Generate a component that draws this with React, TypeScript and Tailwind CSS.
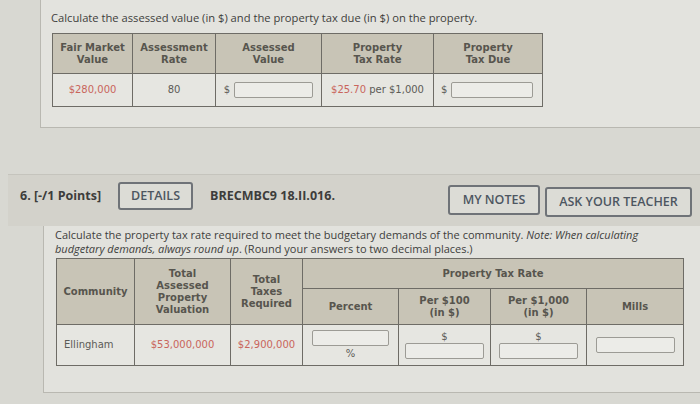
import React from 'react';

const TH =
  "border border-[#6e6c66] bg-[#c8c4b6] px-1 text-center align-middle font-['DejaVu_Sans',sans-serif] text-[10px] font-bold leading-[12px] text-[#57554e]";
const TD =
  "border border-[#6e6c66] bg-[#e6e6e1] px-1 text-center align-middle font-['DejaVu_Sans',sans-serif] text-[10px] leading-[12px] text-[#5c5b57]";
const RED = 'text-[#c9655c]';

const Box = ({ w = 'w-[79px]' }: { w?: string }) => (
  <span className={`inline-block h-[16px] ${w} rounded-[2px] border border-[#9c9b95] bg-[#ecece8] align-middle`} />
);

export default function App() {
  return (
    <div className="h-[404px] w-[700px] overflow-hidden bg-[#d8d8d2] font-['Open_Sans',sans-serif]">
      {/* previous question */}
      <div className="ml-[40px] h-[128px] border-b border-l border-[#b9b8b1] bg-[#e3e3de] pl-[10px] pt-[11px]">
        <p className="whitespace-nowrap text-[11.2px] leading-[14px] text-[#3e3e3c]">
          Calculate the assessed value (in $) and the property tax due (in $) on the property.
        </p>
        <table className="ml-[1px] mt-[8px] border-collapse">
          <thead>
            <tr className="h-[40px]">
              <th className={`${TH} w-[80px]`}>Fair Market<br />Value</th>
              <th className={`${TH} w-[83px]`}>Assessment<br />Rate</th>
              <th className={`${TH} w-[106px]`}>Assessed<br />Value</th>
              <th className={`${TH} w-[112px]`}>Property<br />Tax Rate</th>
              <th className={`${TH} w-[109px]`}>Property<br />Tax Due</th>
            </tr>
          </thead>
          <tbody>
            <tr className="h-[33px]">
              <td className={`${TD} ${RED}`}>$280,000</td>
              <td className={TD}>80</td>
              <td className={TD}>
                <span className="mr-[4px]">$</span>
                <Box />
              </td>
              <td className={TD}>
                <span className={RED}>$25.70</span> per $1,000
              </td>
              <td className={`${TD} text-left`}>
                <span className="ml-[3px] mr-[4px]">$</span>
                <Box w="w-[82px]" />
              </td>
            </tr>
          </tbody>
        </table>
      </div>

      {/* question header */}
      <div className="ml-[8px] mt-[46px] flex h-[52px] items-start border-t border-[#c5c4bd] bg-[#d3d2cb] pl-[12px] pr-[8px]">
        <span className="mt-[7px] text-[12.5px] font-bold leading-[28px] text-[#3d3d3b]">6. [-/1 Points]</span>
        <button className="ml-[17px] mt-[7px] h-[28px] w-[75px] rounded-[3px] border-2 border-[#6f7378] bg-[#dcdcd6] text-[12.5px] font-semibold text-[#4d5661]">
          DETAILS
        </button>
        <span className="ml-[17px] mt-[7px] text-[12.5px] font-bold leading-[28px] text-[#3d3d3b]">BRECMBC9 18.II.016.</span>
        <button className="ml-auto mt-[10px] h-[30px] w-[92px] rounded-[3px] border-2 border-[#6f7378] bg-[#dcdcd6] text-[12.5px] font-semibold text-[#4d5661]">
          MY NOTES
        </button>
        <button className="ml-[5px] mt-[12px] h-[30px] w-[147px] rounded-[3px] border-2 border-[#6f7378] bg-[#dcdcd6] text-[12.5px] font-semibold text-[#4d5661]">
          ASK YOUR TEACHER
        </button>
      </div>

      {/* question body */}
      <div className="ml-[43px] h-[167px] border-b border-l border-[#b9b8b1] bg-[#e2e2dd] pl-[11px] pt-[2px]">
        <p className="whitespace-nowrap text-[11px] leading-[14px] text-[#3e3e3c]">
          Calculate the property tax rate required to meet the budgetary demands of the community.{' '}
          <i>Note: When calculating</i>
          <br />
          <i>budgetary demands, always round up</i>. (Round your answers to two decimal places.)
        </p>
        <table className="ml-[1px] mt-[2px] border-collapse">
          <thead>
            <tr className="h-[30px]">
              <th rowSpan={2} className={`${TH} w-[78px]`}>Community</th>
              <th rowSpan={2} className={`${TH} w-[96px]`}>Total<br />Assessed<br />Property<br />Valuation</th>
              <th rowSpan={2} className={`${TH} w-[72px]`}>Total<br />Taxes<br />Required</th>
              <th colSpan={4} className={TH}>Property Tax Rate</th>
            </tr>
            <tr className="h-[36px]">
              <th className={`${TH} w-[96px]`}>Percent</th>
              <th className={`${TH} w-[92px]`}>Per $100<br />(in $)</th>
              <th className={`${TH} w-[96px]`}>Per $1,000<br />(in $)</th>
              <th className={`${TH} w-[97px]`}>Mills</th>
            </tr>
          </thead>
          <tbody>
            <tr className="h-[41px]">
              <td className={`${TD} pl-[7px] text-left`}>Ellingham</td>
              <td className={`${TD} ${RED}`}>$53,000,000</td>
              <td className={`${TD} ${RED}`}>$2,900,000</td>
              <td className={TD}>
                <div className="flex flex-col items-center">
                  <Box w="w-[77px]" />
                  <span className="mt-[2px] leading-[12px]">%</span>
                </div>
              </td>
              <td className={TD}>
                <div className="flex flex-col items-center">
                  <span className="leading-[12px]">$</span>
                  <Box />
                </div>
              </td>
              <td className={TD}>
                <div className="flex flex-col items-center">
                  <span className="leading-[12px]">$</span>
                  <Box />
                </div>
              </td>
              <td className={TD}>
                <Box />
              </td>
            </tr>
          </tbody>
        </table>
      </div>
    </div>
  );
}
